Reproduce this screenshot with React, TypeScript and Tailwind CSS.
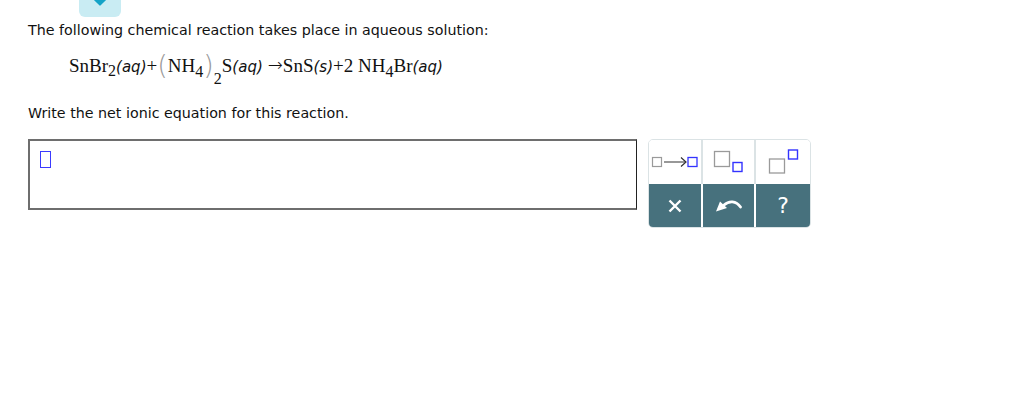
import React from "react";

const sansIt = "italic text-[15px] font-['DejaVu_Sans',sans-serif] relative top-[1px]";
const paren = "text-[#9a9a9a] text-[27px] leading-[24px] relative top-[-1px] font-['DejaVu_Sans',sans-serif] font-extralight";

function Sub({ c, off = 5 }: { c: string; off?: number }) {
  return (
    <span className="relative text-[16px]" style={{ top: off }}>
      {c}
    </span>
  );
}

export default function App() {
  return (
    <div className="relative w-[1024px] h-[415px] bg-white font-['DejaVu_Sans',Verdana,sans-serif] text-[14.25px] text-[#111]">
      {/* top tab */}
      <div className="absolute left-[79px] top-0 w-[42px] h-[17px] rounded-b-[6px] bg-[#c9ecf3]">
        <div className="absolute left-[16px] top-[-6px] w-[10px] h-[10px] rotate-45 bg-[#14a3c7] rounded-[1px]" />
      </div>

      <div className="pt-[21px] pl-[28px]">
        <div className="leading-[18px]">The following chemical reaction takes place in aqueous solution:</div>

        <div className="pl-[41px] mt-[15px] h-[40px] flex items-start font-['Liberation_Serif',serif] text-[19px] leading-[24px] text-[#111] whitespace-pre">
          <span>SnBr</span>
          <Sub c="2" />
          <span className={sansIt}>(aq)</span>
          <span>+</span>
          <span className={paren}>(</span>
          <span>NH</span>
          <Sub c="4" off={6} />
          <span className={paren}>)</span>
          <Sub c="2" off={13} />
          <span>S</span>
          <span className={sansIt}>(aq)</span>
          <span className="ml-[5px] font-['DejaVu_Sans',sans-serif] text-[18px] font-light relative top-[-1px]">→</span>
          <span>SnS</span>
          <span className={sansIt}>(s)</span>
          <span>+2 NH</span>
          <Sub c="4" off={6} />
          <span>Br</span>
          <span className={sansIt}>(aq)</span>
        </div>

        <div className="mt-[10px] leading-[18px]">Write the net ionic equation for this reaction.</div>

        <div className="mt-[17px] flex items-start gap-[11px]">
          <div className="w-[609px] h-[71px] border-2 border-[#6e6e6e] border-r-[#222] border-r-[1.5px] pl-[10px] pt-[10px]">
            <div className="w-[11px] h-[17px] border-[1.5px] border-[#3b3bff]" />
          </div>

          <div className="w-[163px] h-[89px] rounded-[5px] overflow-hidden border border-[#dbe3e5] flex flex-col">
            <div className="h-[44px] grid grid-cols-3 bg-white">
              <div className="border-r-2 border-[#dbe3e5] flex items-center justify-center">
                <svg width="50" height="14" viewBox="0 0 50 14">
                  <rect x="2.5" y="2.5" width="9" height="9" fill="none" stroke="#9a9a9a" strokeWidth="1.2" />
                  <line x1="14" y1="7" x2="36" y2="7" stroke="#333" strokeWidth="1.2" />
                  <path d="M31 2.5 L36 7 L31 11.5" fill="none" stroke="#333" strokeWidth="1.2" />
                  <rect x="38" y="2.5" width="9" height="9" fill="none" stroke="#3333ff" strokeWidth="1.3" />
                </svg>
              </div>
              <div className="border-r-2 border-[#dbe3e5] flex items-center justify-center">
                <svg width="32" height="24" viewBox="0 0 32 24">
                  <rect x="2.5" y="1.5" width="15" height="15" fill="none" stroke="#9a9a9a" strokeWidth="1.3" />
                  <rect x="21" y="12.5" width="9" height="9" fill="none" stroke="#3333ff" strokeWidth="1.4" />
                </svg>
              </div>
              <div className="flex items-center justify-center">
                <svg width="32" height="26" viewBox="0 0 32 26">
                  <rect x="2.5" y="10" width="15" height="14" fill="none" stroke="#9a9a9a" strokeWidth="1.3" />
                  <rect x="21.5" y="1" width="9" height="9" fill="none" stroke="#3333ff" strokeWidth="1.4" />
                </svg>
              </div>
            </div>
            <div className="flex-1 grid grid-cols-3 bg-[#47717d]">
              <div className="border-r-2 border-white flex items-center justify-center">
                <svg width="14" height="14" viewBox="0 0 14 14">
                  <path d="M1.5 1.5 L12.5 12.5 M12.5 1.5 L1.5 12.5" stroke="white" strokeWidth="2.4" />
                </svg>
              </div>
              <div className="border-r-2 border-white flex items-center justify-center">
                <svg width="27" height="14" viewBox="0 0 27 14">
                  <path d="M9 6 C14 1.5 21 1.5 25.5 8" fill="none" stroke="white" strokeWidth="2.8" strokeLinecap="round" />
                  <path d="M1 12.5 L5 2.5 L12 9 Z" fill="white" />
                </svg>
              </div>
              <div className="flex items-center justify-center text-white text-[22px] leading-none font-['DejaVu_Sans',sans-serif] font-normal">?</div>
            </div>
          </div>
        </div>
      </div>
    </div>
  );
}
